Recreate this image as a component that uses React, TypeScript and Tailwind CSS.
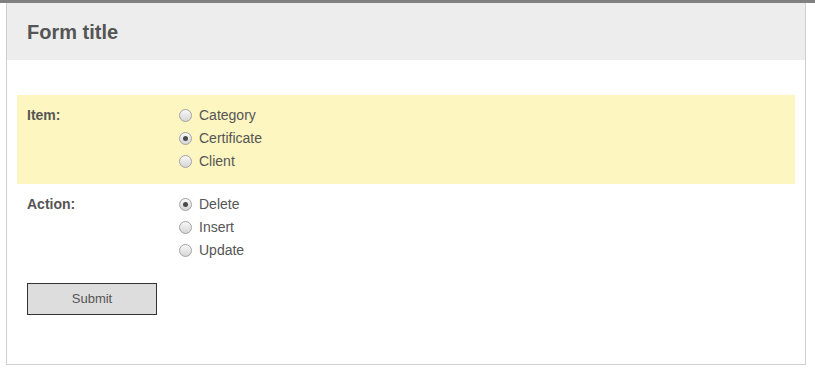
import React from "react";

interface IOption {
  label: string;
  checked?: boolean;
}

const Radio: React.FC<IOption> = ({ label, checked }) => {
  return (
    <label className="flex h-[23px] items-center gap-[7px]">
      <span className="flex h-[13px] w-[13px] items-center justify-center rounded-full border border-[#a3a3a3] bg-linear-to-b from-[#f8f8f8] to-[#d6d6d6]">
        {checked && <span className="h-[5px] w-[5px] rounded-full bg-[#4a4a4a]" />}
      </span>
      <span className="text-[14px] text-[#555]">{label}</span>
    </label>
  );
};

const FieldRow: React.FC<{
  label: string;
  options: IOption[];
  highlight?: boolean;
}> = ({ label, options, highlight }) => {
  return (
    <div
      className={`mx-[10px] flex pt-[9px] pb-[11px] pl-[10px] ${
        highlight ? "bg-[#fdf6c0]" : ""
      }`}
    >
      <div className="flex h-[23px] w-[152px] items-center text-[14px] font-bold text-[#555]">
        {label}
      </div>
      <div className="flex flex-col">
        {options.map((o) => (
          <Radio key={o.label} {...o} />
        ))}
      </div>
    </div>
  );
};

export default function App() {
  return (
    <div
      className="min-h-[373px] border-t-[3px] border-[#808080] bg-white"
      style={{ fontFamily: '"Liberation Sans", Arial, sans-serif' }}
    >
      <div className="ml-[6px] h-[362px] w-[800px] border-x border-b border-[#cfcfcf]">
        <div className="flex h-[57px] items-center bg-[#ededed] pl-[20px]">
          <h1 className="text-[20px] font-bold text-[#555]">Form title</h1>
        </div>
        <div className="pt-[35px]">
          <FieldRow
            label="Item:"
            highlight
            options={[
              { label: "Category" },
              { label: "Certificate", checked: true },
              { label: "Client" },
            ]}
          />
          <FieldRow
            label="Action:"
            options={[
              { label: "Delete", checked: true },
              { label: "Insert" },
              { label: "Update" },
            ]}
          />
          <div className="pl-[20px] pt-[10px]">
            <button className="h-[32px] w-[130px] border border-[#333] bg-[#ddd] text-[13px] text-[#555]">
              Submit
            </button>
          </div>
        </div>
      </div>
    </div>
  );
}
